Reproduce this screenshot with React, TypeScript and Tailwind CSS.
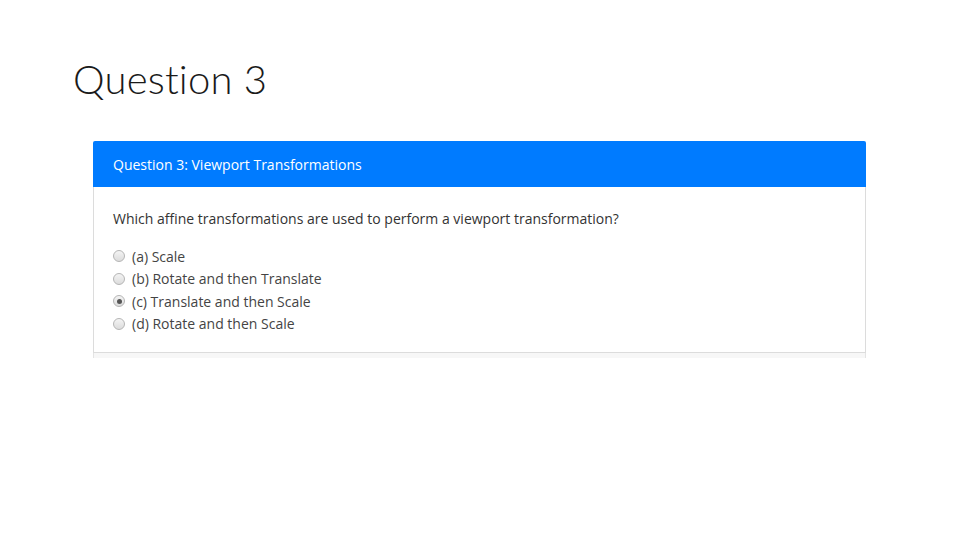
export default function App() {
  const options = [
    { label: "(a) Scale", checked: false },
    { label: "(b) Rotate and then Translate", checked: false },
    { label: "(c) Translate and then Scale", checked: true },
    { label: "(d) Rotate and then Scale", checked: false },
  ];
  return (
    <div className="w-[960px] h-[540px] bg-white overflow-hidden" style={{ fontFamily: '"Open Sans", "Noto Sans", sans-serif' }}>
      <div className="pl-[73px] pt-[52px] h-[141px]">
        <h1 className="text-[40px] leading-[54px] font-light text-[#1a1a1a] tracking-[0.2px]" style={{ fontFamily: 'Lato, "Open Sans", sans-serif' }}>
          Question 3
        </h1>
      </div>
      <div className="ml-[93px] w-[773px] h-[217px] flex flex-col overflow-hidden">
        <div className="h-[46px] bg-[#007bff] flex items-center pl-[20px] pt-[1px] rounded-t-[2px]">
          <span className="text-white text-[14px] tracking-[0px]">Question 3: Viewport Transformations</span>
        </div>
        <div className="border-x border-b border-[#dcdcdc] h-[166px] pl-[19px] pt-[22px] text-[#333]">
          <p className="text-[14px] leading-[20px] tracking-[0px]">Which affine transformations are used to perform a viewport transformation?</p>
          <div className="mt-[16px] flex flex-col">
            {options.map((o) => (
              <div key={o.label} className="flex items-center h-[22.5px] gap-[7px]">
                <span className="w-[12px] h-[12px] rounded-full border border-[#b5b5b5] bg-gradient-to-b from-[#f4f4f4] to-[#dcdcdc] flex items-center justify-center">
                  {o.checked && <span className="w-[5px] h-[5px] rounded-full bg-[#555]" />}
                </span>
                <span className="text-[14px] text-[#444] tracking-[0px]">{o.label}</span>
              </div>
            ))}
          </div>
        </div>
        <div className="h-[5px] border-x border-[#e4e4e4] bg-[#f7f7f7]" />
      </div>
    </div>
  );
}
